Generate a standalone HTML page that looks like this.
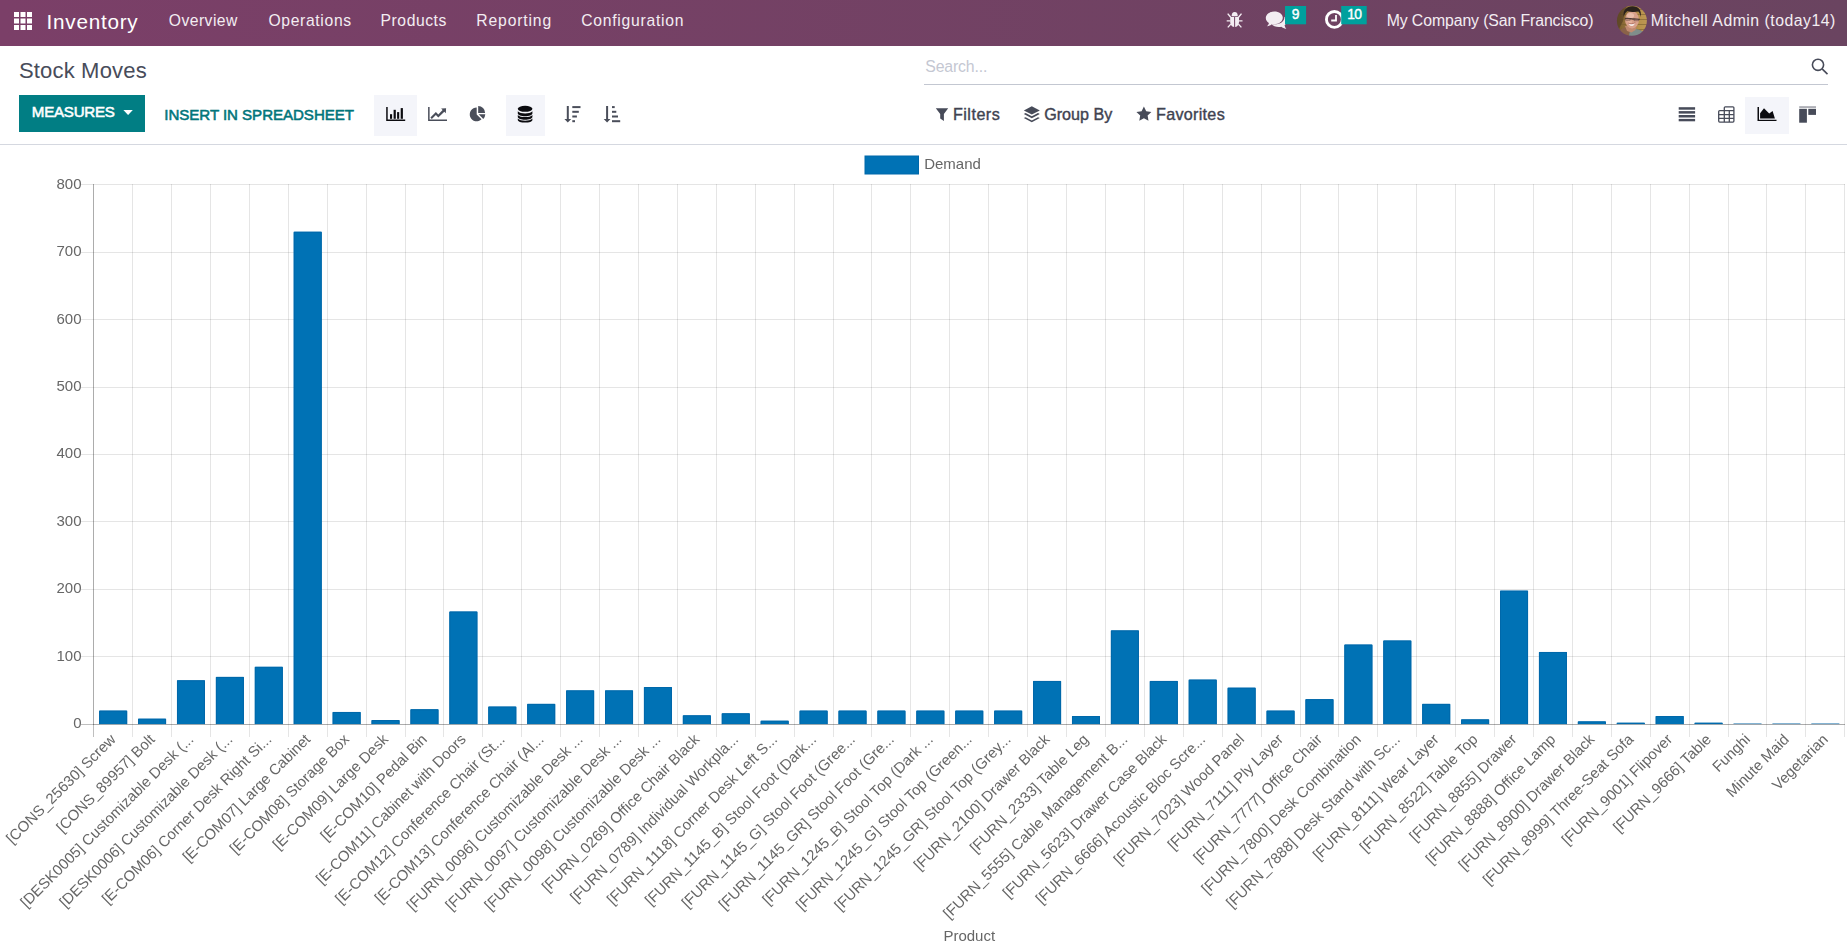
<!DOCTYPE html>
<html lang="en"><head><meta charset="utf-8"><title>Odoo - Stock Moves</title>
<style>
html,body{margin:0;padding:0;background:#fff;}
body{width:1847px;height:951px;overflow:hidden;position:relative;font-family:"Liberation Sans", sans-serif;}
.t{position:absolute;white-space:nowrap;font-family:"Liberation Sans", sans-serif;}
.abs{position:absolute;}
#nav{position:absolute;left:0;top:0;width:1847px;height:46px;background:linear-gradient(90deg,#7b3f68 0%,#6a4460 100%);}
#cpb{position:absolute;left:0;top:144px;width:1847px;height:1px;background:#d5d8e0;}
#sline{position:absolute;left:924px;top:84px;width:904px;height:1px;background:#c3c7d1;}
#btnm{position:absolute;left:19px;top:95px;width:126px;height:37px;background:#017e84;}
.abg{position:absolute;background:#f4f5fa;}
.badge{position:absolute;background:#00a09d;}
</style></head>
<body>
<div id="nav"></div>
<div id="btnm"></div>
<div class="abg" style="left:374px;top:95px;width:43px;height:41px"></div>
<div class="abg" style="left:506px;top:95px;width:39px;height:41px"></div>
<div class="abg" style="left:1745px;top:97px;width:44px;height:37px"></div>
<div id="sline"></div>
<div id="cpb"></div>
<svg id="icons" width="1847" height="145" viewBox="0 0 1847 145" style="position:absolute;left:0;top:0">
<!-- apps grid -->
<g fill="#fff">
<rect x="14" y="12" width="5" height="5"/><rect x="20.5" y="12" width="5" height="5"/><rect x="27" y="12" width="5" height="5"/>
<rect x="14" y="18.5" width="5" height="5"/><rect x="20.5" y="18.5" width="5" height="5"/><rect x="27" y="18.5" width="5" height="5"/>
<rect x="14" y="25" width="5" height="5"/><rect x="20.5" y="25" width="5" height="5"/><rect x="27" y="25" width="5" height="5"/>
</g>
<!-- bug -->
<g fill="#f3edf2" stroke="none">
<path d="M1231.600 16.300a3.100 4.300 0 0 1 6.200 0z"/>
<path d="M1230.200 17.100h3.900v10c-2.600-.3-3.900-2.500-3.900-5z"/>
<path d="M1235.100 17.100h3.900v5c0 2.500-1.300 4.700-3.900 5z"/>
<g stroke="#f3edf2" stroke-width="1.400" fill="none">
<path d="M1227.700 13.600l3 3.700M1241.500 13.600l-3 3.700M1226.700 20.900h3.600M1242.500 20.900h-3.600M1227.800 27.400l3-3.300M1241.400 27.400l-3-3.300"/>
</g>
</g>
<!-- comments -->
<g fill="#f3edf2">
<path d="M1271.500 23.800c1.300 2.100 4.300 3.200 7.300 3.200.9 0 1.700-.1 2.500-.3 1.300 1 2.800 1.900 5 2.200-.9-1.100-1.500-2.300-1.700-3.600 1.500-1 2.500-2.500 2.500-4.200 0-1.700-1-3.300-2.700-4.300.2 3.500-2.200 6.200-6.500 7.200-2.200.5-4.500.4-6.400-.2z"/>
<path d="M1274.300 11.500c-4.700 0-8.500 2.900-8.500 6.500 0 2 1.200 3.800 3.100 5-.2 1.200-.9 2.400-1.900 3.300 2 -.2 3.900-1.100 5.200-2.200.7.100 1.400.2 2.100.2 4.700 0 8.500-2.900 8.500-6.500s-3.800-6.300-8.500-6.300z"/>
</g>
<!-- clock -->
<g fill="none" stroke="#fff">
<circle cx="1334.400" cy="19.400" r="7.950" stroke-width="2.900"/>
<path d="M1336 14.900v5.600h-4.800" stroke-width="1.800"/>
</g>
<!-- badges -->
<rect x="1285" y="6" width="21.100" height="18.300" fill="#00a09d"/><rect x="1341.200" y="6" width="25.500" height="18.300" fill="#00a09d"/>
<!-- avatar -->
<defs><clipPath id="avc"><circle cx="1631.900" cy="20.800" r="15"/></clipPath>
<filter id="avb" x="-10%" y="-10%" width="120%" height="120%"><feGaussianBlur stdDeviation="0.55"/></filter>
<linearGradient id="avbg" x1="0" y1="0" x2="1" y2="0"><stop offset="0" stop-color="#6e5228"/><stop offset="0.35" stop-color="#94733a"/><stop offset="0.7" stop-color="#b8924c"/><stop offset="1" stop-color="#c09a55"/></linearGradient></defs>
<g clip-path="url(#avc)"><g filter="url(#avb)">
<rect x="1614" y="3" width="36" height="36" fill="url(#avbg)"/>
<path d="M1614 9.500h36M1614 14.500h36M1614 19.500h36M1614 24.500h36M1614 29.500h36" stroke="#7a5f30" stroke-width="1.100" opacity=".6"/>
<path d="M1614 3h14l-3 8-2 10-4 8-5 2z" fill="#4a3620" opacity=".55"/>
<path d="M1617 37c0-5 3-8 8-9.500l4-1 3 4 8-.5c3 1.500 6 4 7 8z" fill="#8a6248"/>
<path d="M1628.500 38l1.500-7.500 6-1.500c4 .5 8 2.500 11 6l1 4z" fill="#7f8d8b"/>
<path d="M1625 26l2 5 4.500 1.500 4-2.500 1.500-5z" fill="#c08a70"/>
<ellipse cx="1632" cy="19.700" rx="7" ry="8.700" fill="#d8a08a"/>
<ellipse cx="1630.500" cy="15.500" rx="3.600" ry="2.600" fill="#ecc3b0" opacity=".8"/>
<ellipse cx="1629.800" cy="22" rx="2.300" ry="2" fill="#e9b5a0" opacity=".7"/>
<path d="M1623.800 16.500c-1.300-6 2.500-10.300 8.700-10.300 6 0 9.300 3.800 8.300 10.800-.5-2.500-1.300-4.300-2.500-5.500-3.500.8-8 .5-10.800-.5-1.800 1.300-3 3-3.700 5.500z" fill="#2a211e"/>
<path d="M1624.800 18.300l5.800.4 1.800.3 1.800-.2 5.500.5" stroke="#3d2f2b" stroke-width="1.300" fill="none" opacity=".85"/>
<path d="M1625.600 18.300v1.900h4.600v-1.900M1634 18.800v1.900h4.600v-1.700" stroke="#4b3a35" stroke-width=".7" fill="none" opacity=".7"/>
<path d="M1628.300 23.200c2 1 4.800 1 6.800-.3-.8 2.300-2.300 3.100-3.500 3.100s-2.600-.9-3.300-2.800z" fill="#f4e9e4"/>
<path d="M1628 23c2.300 1.100 5 1 7.300-.4" stroke="#9c5348" stroke-width=".6" fill="none"/>
</g></g>
<!-- caret in MEASURES -->
<path d="M123.400 109.900h9.400l-4.700 5z" fill="#fff"/>
<!-- bar chart (active, black) -->
<g fill="#0b0b0f">
<path d="M386.200 107.100h1.500v12.500h17.500v1.400h-19z"/>
<rect x="390" y="114.200" width="2.100" height="4.600"/><rect x="393.600" y="109.800" width="2.200" height="9"/><rect x="397.100" y="112.100" width="2.100" height="6.700"/><rect x="400.700" y="108.100" width="2.200" height="10.700"/>
</g>
<!-- line chart -->
<g fill="#4a4e5a">
<path d="M428.100 107.100h1.500v12.500h17.400v1.400h-18.900z"/>
<path d="M431.800 118.900l-1.400-1.400 5.500-5.600 2.400 2.500 4.300-4.300-1.500-1.600 5-.3-.3 5-1.500-1.500-6 5.900-2.400-2.500z"/>
</g>
<!-- pie chart -->
<g fill="#4a4e5a">
<path d="M476.700 107.500v6.900l4.800 4.900a6.900 6.900 0 1 1-4.800-11.800z"/>
<path d="M478.200 106.100a6.900 6.900 0 0 1 6.900 6.900h-6.900z"/>
<path d="M478.700 114.300h6.600a6.900 6.900 0 0 1-2 4.600z"/>
</g>
<!-- database (active, black) -->
<g fill="#0b0b0f">
<ellipse cx="525.100" cy="108.800" rx="7.300" ry="3"/>
<path d="M517.800 111.300c1.300 1.600 4.300 2.200 7.300 2.200s6-.6 7.300-2.200v2.200c0 1.500-3.300 2.700-7.300 2.700s-7.300-1.200-7.300-2.700z"/>
<path d="M517.800 114.900c1.300 1.600 4.300 2.200 7.300 2.200s6-.6 7.300-2.200v2.200c0 1.500-3.300 2.700-7.300 2.700s-7.300-1.200-7.300-2.700z"/>
<path d="M517.800 118.500c1.300 1.600 4.300 2.200 7.300 2.200s6-.6 7.300-2.200v1.400c0 1.500-3.300 2.700-7.300 2.700s-7.300-1.200-7.300-2.700z"/>
</g>
<!-- sort amount desc -->
<g fill="#4a4e5a">
<path d="M566.800 106.100h2v12.800h2.400l-3.400 3.500-3.400-3.500h2.400z"/>
<rect x="572.300" y="106.100" width="8.200" height="2"/><rect x="572.300" y="110.800" width="6.500" height="2"/><rect x="572.300" y="115.500" width="4.600" height="2"/><rect x="572.300" y="120.200" width="2.700" height="2"/>
</g>
<!-- sort amount asc -->
<g fill="#4a4e5a">
<path d="M606.100 106.100h2v12.800h2.400l-3.400 3.500-3.400-3.500h2.400z"/>
<rect x="612" y="106.100" width="2.700" height="2"/><rect x="612" y="110.800" width="4.300" height="2"/><rect x="612" y="115.500" width="6" height="2"/><rect x="612" y="120.200" width="8.200" height="2"/>
</g>
<!-- filter -->
<path d="M935.800 108.200h12.400l-4.300 5.700v7.200l-3.700-2.700v-4.500z" fill="#474b59"/>
<!-- group by (layers) -->
<g fill="#474b59">
<path d="M1031.800 106.200l8 4.200-8 4.200-8-4.200z"/>
<path d="M1025.600 113.100l6.200 3.200 6.200-3.200 1.800.9-8 4.200-8-4.200z"/>
<path d="M1025.600 117.200l6.200 3.200 6.200-3.200 1.800.9-8 4.200-8-4.200z"/>
</g>
<!-- star -->
<path d="M1143.900 106.500l2.300 4.800 5.200.7-3.800 3.600.9 5.200-4.600-2.500-4.600 2.500.9-5.200-3.800-3.600 5.200-.7z" fill="#474b59"/>
<!-- search -->
<g fill="none" stroke="#474b59" stroke-width="1.600">
<circle cx="1818" cy="64.800" r="5.600"/><path d="M1822.100 68.900l5.400 5.200"/>
</g>
<!-- list view -->
<g fill="#474b59">
<rect x="1678.700" y="107.200" width="16.400" height="2.500"/><rect x="1678.700" y="111.100" width="16.400" height="2.500"/><rect x="1678.700" y="115" width="16.400" height="2.500"/><rect x="1678.700" y="118.900" width="16.400" height="2.400"/>
</g>
<!-- pivot view -->
<g fill="none" stroke="#474b59" stroke-width="1.300">
<path d="M1724.300 110.600v-2.800a1 1 0 0 1 1-1h7.600a1 1 0 0 1 1 1v13.300a1 1 0 0 1-1 1h-13.200a1 1 0 0 1-1-1v-9.500a1 1 0 0 1 1-1h14.200"/>
<path d="M1724.300 110.600v11.500M1729.300 110.600v11.500M1718.700 114.600h15.200M1718.700 118.400h15.200"/>
</g>
<!-- graph view (active) -->
<g fill="#0b0b0f">
<path d="M1757.500 107.100h1.500v12.600h17.500v1.300h-19z"/>
<path d="M1760.100 118.500v-5.300l3.900-4.900 5.200 5.300 3.400-2.700 2.300 7.600z"/>
</g>
<!-- kanban view -->
<g fill="#474b59">
<rect x="1799.200" y="106.300" width="16.800" height="1.500" opacity=".55"/>
<rect x="1799.200" y="108.800" width="7.700" height="13.900"/><rect x="1808.300" y="108.800" width="7.700" height="6.100"/>
</g>
</svg>

<div id="t_brand" class="t" style="left:46.50px;top:8.02px;font-size:20.73px;line-height:27px;color:#ffffff;font-weight:400;letter-spacing:0.749px;">Inventory</div>
<div id="t_m1" class="t" style="left:168.80px;top:9.86px;font-size:15.69px;line-height:21px;color:#f3edf2;font-weight:400;letter-spacing:0.457px;">Overview</div>
<div id="t_m2" class="t" style="left:268.40px;top:9.86px;font-size:15.69px;line-height:21px;color:#f3edf2;font-weight:400;letter-spacing:0.667px;">Operations</div>
<div id="t_m3" class="t" style="left:380.60px;top:9.86px;font-size:15.69px;line-height:21px;color:#f3edf2;font-weight:400;letter-spacing:0.543px;">Products</div>
<div id="t_m4" class="t" style="left:476.30px;top:9.86px;font-size:15.69px;line-height:21px;color:#f3edf2;font-weight:400;letter-spacing:0.851px;">Reporting</div>
<div id="t_m5" class="t" style="left:581.20px;top:9.86px;font-size:15.69px;line-height:21px;color:#f3edf2;font-weight:400;letter-spacing:0.750px;">Configuration</div>
<div id="t_b9" class="t" style="left:1291.70px;top:5.21px;font-size:13.83px;line-height:18px;color:#ffffff;font-weight:400;letter-spacing:0.000px;-webkit-text-stroke:0.4px #fff;">9</div>
<div id="t_b10" class="t" style="left:1347.20px;top:5.21px;font-size:13.83px;line-height:18px;color:#ffffff;font-weight:400;letter-spacing:-0.550px;-webkit-text-stroke:0.4px #fff;">10</div>
<div id="t_comp" class="t" style="left:1386.70px;top:9.61px;font-size:15.84px;line-height:21px;color:#f3edf2;font-weight:400;letter-spacing:-0.104px;">My Company (San Francisco)</div>
<div id="t_user" class="t" style="left:1650.80px;top:9.61px;font-size:15.84px;line-height:21px;color:#f3edf2;font-weight:400;letter-spacing:0.487px;">Mitchell Admin (today14)</div>
<div id="t_title" class="t" style="left:18.90px;top:55.66px;font-size:22.06px;line-height:29px;color:#484c5a;font-weight:400;letter-spacing:0.160px;">Stock Moves</div>
<div id="t_meas" class="t" style="left:31.80px;top:102.27px;font-size:15.1px;line-height:20px;color:#ffffff;font-weight:400;letter-spacing:-0.228px;-webkit-text-stroke:0.55px #fff;">MEASURES</div>
<div id="t_ins" class="t" style="left:164.30px;top:104.77px;font-size:15.08px;line-height:20px;color:#01757b;font-weight:400;letter-spacing:-0.040px;-webkit-text-stroke:0.55px #01757b;">INSERT IN SPREADSHEET</div>
<div id="t_search" class="t" style="left:925.30px;top:56.02px;font-size:15.82px;line-height:21px;color:#c4c7d2;font-weight:400;letter-spacing:-0.149px;">Search...</div>
<div id="t_filt" class="t" style="left:952.90px;top:103.51px;font-size:16.14px;line-height:21px;color:#3f4351;font-weight:400;letter-spacing:0.500px;-webkit-text-stroke:0.4px #3f4351;">Filters</div>
<div id="t_grp" class="t" style="left:1044.20px;top:103.51px;font-size:16.14px;line-height:21px;color:#3f4351;font-weight:400;letter-spacing:0.000px;-webkit-text-stroke:0.4px #3f4351;">Group By</div>
<div id="t_fav" class="t" style="left:1156.00px;top:103.51px;font-size:16.14px;line-height:21px;color:#3f4351;font-weight:400;letter-spacing:0.299px;-webkit-text-stroke:0.4px #3f4351;">Favorites</div>
<svg id="chart" width="1847" height="806" viewBox="0 145 1847 806" style="position:absolute;left:0;top:145px;will-change:transform" font-family='"Liberation Sans", sans-serif'>
<g shape-rendering="crispEdges" stroke-width="1" fill="none"><path d="M93.5 184.0V737.0" stroke="rgba(0,0,0,0.25)"/><path d="M132.5 184.0V737.0" stroke="rgba(0,0,0,0.1)"/><path d="M171.5 184.0V737.0" stroke="rgba(0,0,0,0.1)"/><path d="M210.5 184.0V737.0" stroke="rgba(0,0,0,0.1)"/><path d="M249.5 184.0V737.0" stroke="rgba(0,0,0,0.1)"/><path d="M288.5 184.0V737.0" stroke="rgba(0,0,0,0.1)"/><path d="M327.5 184.0V737.0" stroke="rgba(0,0,0,0.1)"/><path d="M366.5 184.0V737.0" stroke="rgba(0,0,0,0.1)"/><path d="M405.5 184.0V737.0" stroke="rgba(0,0,0,0.1)"/><path d="M443.5 184.0V737.0" stroke="rgba(0,0,0,0.1)"/><path d="M482.5 184.0V737.0" stroke="rgba(0,0,0,0.1)"/><path d="M521.5 184.0V737.0" stroke="rgba(0,0,0,0.1)"/><path d="M560.5 184.0V737.0" stroke="rgba(0,0,0,0.1)"/><path d="M599.5 184.0V737.0" stroke="rgba(0,0,0,0.1)"/><path d="M638.5 184.0V737.0" stroke="rgba(0,0,0,0.1)"/><path d="M677.5 184.0V737.0" stroke="rgba(0,0,0,0.1)"/><path d="M716.5 184.0V737.0" stroke="rgba(0,0,0,0.1)"/><path d="M755.5 184.0V737.0" stroke="rgba(0,0,0,0.1)"/><path d="M794.5 184.0V737.0" stroke="rgba(0,0,0,0.1)"/><path d="M833.5 184.0V737.0" stroke="rgba(0,0,0,0.1)"/><path d="M871.5 184.0V737.0" stroke="rgba(0,0,0,0.1)"/><path d="M910.5 184.0V737.0" stroke="rgba(0,0,0,0.1)"/><path d="M949.5 184.0V737.0" stroke="rgba(0,0,0,0.1)"/><path d="M988.5 184.0V737.0" stroke="rgba(0,0,0,0.1)"/><path d="M1027.5 184.0V737.0" stroke="rgba(0,0,0,0.1)"/><path d="M1066.5 184.0V737.0" stroke="rgba(0,0,0,0.1)"/><path d="M1105.5 184.0V737.0" stroke="rgba(0,0,0,0.1)"/><path d="M1144.5 184.0V737.0" stroke="rgba(0,0,0,0.1)"/><path d="M1183.5 184.0V737.0" stroke="rgba(0,0,0,0.1)"/><path d="M1222.5 184.0V737.0" stroke="rgba(0,0,0,0.1)"/><path d="M1261.5 184.0V737.0" stroke="rgba(0,0,0,0.1)"/><path d="M1300.5 184.0V737.0" stroke="rgba(0,0,0,0.1)"/><path d="M1338.5 184.0V737.0" stroke="rgba(0,0,0,0.1)"/><path d="M1377.5 184.0V737.0" stroke="rgba(0,0,0,0.1)"/><path d="M1416.5 184.0V737.0" stroke="rgba(0,0,0,0.1)"/><path d="M1455.5 184.0V737.0" stroke="rgba(0,0,0,0.1)"/><path d="M1494.5 184.0V737.0" stroke="rgba(0,0,0,0.1)"/><path d="M1533.5 184.0V737.0" stroke="rgba(0,0,0,0.1)"/><path d="M1572.5 184.0V737.0" stroke="rgba(0,0,0,0.1)"/><path d="M1611.5 184.0V737.0" stroke="rgba(0,0,0,0.1)"/><path d="M1650.5 184.0V737.0" stroke="rgba(0,0,0,0.1)"/><path d="M1689.5 184.0V737.0" stroke="rgba(0,0,0,0.1)"/><path d="M1728.5 184.0V737.0" stroke="rgba(0,0,0,0.1)"/><path d="M1766.5 184.0V737.0" stroke="rgba(0,0,0,0.1)"/><path d="M1805.5 184.0V737.0" stroke="rgba(0,0,0,0.1)"/><path d="M1844.5 184.0V737.0" stroke="rgba(0,0,0,0.1)"/><path d="M81.0 724.5H1845.0" stroke="rgba(0,0,0,0.25)"/><path d="M81.0 656.5H1845.0" stroke="rgba(0,0,0,0.1)"/><path d="M81.0 589.5H1845.0" stroke="rgba(0,0,0,0.1)"/><path d="M81.0 521.5H1845.0" stroke="rgba(0,0,0,0.1)"/><path d="M81.0 454.5H1845.0" stroke="rgba(0,0,0,0.1)"/><path d="M81.0 387.5H1845.0" stroke="rgba(0,0,0,0.1)"/><path d="M81.0 319.5H1845.0" stroke="rgba(0,0,0,0.1)"/><path d="M81.0 252.5H1845.0" stroke="rgba(0,0,0,0.1)"/><path d="M81.0 184.5H1845.0" stroke="rgba(0,0,0,0.1)"/><path d="M93.5 184.0V725.0" stroke="rgba(0,0,0,0.1)"/><path d="M93.0 724.5H1845.0" stroke="rgba(0,0,0,0.1)"/></g>
<g fill="#0072b5" stroke="#0068aa" stroke-width="1"><rect x="99.15" y="710.62" width="28.02" height="13.48" stroke="none"/><path d="M99.65 724.10V711.12H126.67V724.10" fill="none"/><rect x="138.06" y="718.71" width="28.02" height="5.39" stroke="none"/><path d="M138.56 724.10V719.21H165.58V724.10" fill="none"/><rect x="176.97" y="680.29" width="28.02" height="43.81" stroke="none"/><path d="M177.47 724.10V680.79H204.49V724.10" fill="none"/><rect x="215.89" y="676.92" width="28.02" height="47.18" stroke="none"/><path d="M216.39 724.10V677.42H243.41V724.10" fill="none"/><rect x="254.80" y="666.81" width="28.02" height="57.29" stroke="none"/><path d="M255.30 724.10V667.31H282.32V724.10" fill="none"/><rect x="293.71" y="231.74" width="28.02" height="492.36" stroke="none"/><path d="M294.21 724.10V232.24H321.23V724.10" fill="none"/><rect x="332.63" y="711.97" width="28.02" height="12.13" stroke="none"/><path d="M333.13 724.10V712.47H360.15V724.10" fill="none"/><rect x="371.54" y="720.06" width="28.02" height="4.04" stroke="none"/><path d="M372.04 724.10V720.56H399.06V724.10" fill="none"/><rect x="410.45" y="709.27" width="28.02" height="14.83" stroke="none"/><path d="M410.95 724.10V709.77H437.97V724.10" fill="none"/><rect x="449.37" y="611.54" width="28.02" height="112.56" stroke="none"/><path d="M449.87 724.10V612.04H476.89V724.10" fill="none"/><rect x="488.28" y="706.58" width="28.02" height="17.52" stroke="none"/><path d="M488.78 724.10V707.08H515.80V724.10" fill="none"/><rect x="527.19" y="703.88" width="28.02" height="20.22" stroke="none"/><path d="M527.69 724.10V704.38H554.71V724.10" fill="none"/><rect x="566.11" y="690.40" width="28.02" height="33.70" stroke="none"/><path d="M566.61 724.10V690.90H593.63V724.10" fill="none"/><rect x="605.02" y="690.40" width="28.02" height="33.70" stroke="none"/><path d="M605.52 724.10V690.90H632.54V724.10" fill="none"/><rect x="643.93" y="687.03" width="28.02" height="37.07" stroke="none"/><path d="M644.43 724.10V687.53H671.45V724.10" fill="none"/><rect x="682.85" y="715.34" width="28.02" height="8.76" stroke="none"/><path d="M683.35 724.10V715.84H710.37V724.10" fill="none"/><rect x="721.76" y="713.32" width="28.02" height="10.78" stroke="none"/><path d="M722.26 724.10V713.82H749.28V724.10" fill="none"/><rect x="760.67" y="720.73" width="28.02" height="3.37" stroke="none"/><path d="M761.17 724.10V721.23H788.19V724.10" fill="none"/><rect x="799.59" y="710.62" width="28.02" height="13.48" stroke="none"/><path d="M800.09 724.10V711.12H827.11V724.10" fill="none"/><rect x="838.50" y="710.62" width="28.02" height="13.48" stroke="none"/><path d="M839.00 724.10V711.12H866.02V724.10" fill="none"/><rect x="877.41" y="710.62" width="28.02" height="13.48" stroke="none"/><path d="M877.91 724.10V711.12H904.93V724.10" fill="none"/><rect x="916.33" y="710.62" width="28.02" height="13.48" stroke="none"/><path d="M916.83 724.10V711.12H943.85V724.10" fill="none"/><rect x="955.24" y="710.62" width="28.02" height="13.48" stroke="none"/><path d="M955.74 724.10V711.12H982.76V724.10" fill="none"/><rect x="994.15" y="710.62" width="28.02" height="13.48" stroke="none"/><path d="M994.65 724.10V711.12H1021.67V724.10" fill="none"/><rect x="1033.07" y="680.96" width="28.02" height="43.14" stroke="none"/><path d="M1033.57 724.10V681.46H1060.59V724.10" fill="none"/><rect x="1071.98" y="716.01" width="28.02" height="8.09" stroke="none"/><path d="M1072.48 724.10V716.51H1099.50V724.10" fill="none"/><rect x="1110.89" y="630.41" width="28.02" height="93.69" stroke="none"/><path d="M1111.39 724.10V630.91H1138.41V724.10" fill="none"/><rect x="1149.81" y="680.96" width="28.02" height="43.14" stroke="none"/><path d="M1150.31 724.10V681.46H1177.33V724.10" fill="none"/><rect x="1188.72" y="679.62" width="28.02" height="44.48" stroke="none"/><path d="M1189.22 724.10V680.12H1216.24V724.10" fill="none"/><rect x="1227.63" y="687.70" width="28.02" height="36.40" stroke="none"/><path d="M1228.13 724.10V688.20H1255.15V724.10" fill="none"/><rect x="1266.55" y="710.62" width="28.02" height="13.48" stroke="none"/><path d="M1267.05 724.10V711.12H1294.07V724.10" fill="none"/><rect x="1305.46" y="699.16" width="28.02" height="24.94" stroke="none"/><path d="M1305.96 724.10V699.66H1332.98V724.10" fill="none"/><rect x="1344.37" y="644.57" width="28.02" height="79.53" stroke="none"/><path d="M1344.87 724.10V645.07H1371.89V724.10" fill="none"/><rect x="1383.29" y="640.52" width="28.02" height="83.58" stroke="none"/><path d="M1383.79 724.10V641.02H1410.81V724.10" fill="none"/><rect x="1422.20" y="703.88" width="28.02" height="20.22" stroke="none"/><path d="M1422.70 724.10V704.38H1449.72V724.10" fill="none"/><rect x="1461.11" y="719.38" width="28.02" height="4.72" stroke="none"/><path d="M1461.61 724.10V719.88H1488.63V724.10" fill="none"/><rect x="1500.03" y="590.65" width="28.02" height="133.45" stroke="none"/><path d="M1500.53 724.10V591.15H1527.55V724.10" fill="none"/><rect x="1538.94" y="651.98" width="28.02" height="72.12" stroke="none"/><path d="M1539.44 724.10V652.48H1566.46V724.10" fill="none"/><rect x="1577.85" y="721.40" width="28.02" height="2.70" stroke="none"/><path d="M1578.35 724.10V721.90H1605.37V724.10" fill="none"/><rect x="1616.77" y="722.75" width="28.02" height="1.35" stroke="none"/><path d="M1617.27 724.10V723.25H1644.29V724.10" fill="none"/><rect x="1655.68" y="716.01" width="28.02" height="8.09" stroke="none"/><path d="M1656.18 724.10V716.51H1683.20V724.10" fill="none"/><rect x="1694.59" y="722.75" width="28.02" height="1.35" stroke="none"/><path d="M1695.09 724.10V723.25H1722.11V724.10" fill="none"/><rect x="1733.51" y="723.43" width="28.02" height="0.67" stroke="none" fill="rgba(0,100,164,0.85)"/><rect x="1772.42" y="723.43" width="28.02" height="0.67" stroke="none" fill="rgba(0,100,164,0.85)"/><rect x="1811.33" y="723.43" width="28.02" height="0.67" stroke="none" fill="rgba(0,100,164,0.85)"/></g>
<g font-size="15.0" fill="#666" text-anchor="end"><text x="81.5" y="728.00">0</text><text x="81.5" y="660.60">100</text><text x="81.5" y="593.20">200</text><text x="81.5" y="525.80">300</text><text x="81.5" y="458.40">400</text><text x="81.5" y="391.00">500</text><text x="81.5" y="323.60">600</text><text x="81.5" y="256.20">700</text><text x="81.5" y="188.80">800</text></g>
<g font-size="15.0" fill="#666" text-anchor="end"><text transform="translate(113.16 736.70) rotate(-45.0)" y="5.0">[CONS_25630] Screw</text><text transform="translate(152.07 736.70) rotate(-45.0)" y="5.0">[CONS_89957] Bolt</text><text transform="translate(190.98 736.70) rotate(-45.0)" y="5.0">[DESK0005] Customizable Desk (...</text><text transform="translate(229.90 736.70) rotate(-45.0)" y="5.0">[DESK0006] Customizable Desk (...</text><text transform="translate(268.81 736.70) rotate(-45.0)" y="5.0">[E-COM06] Corner Desk Right Si...</text><text transform="translate(307.72 736.70) rotate(-45.0)" y="5.0">[E-COM07] Large Cabinet</text><text transform="translate(346.64 736.70) rotate(-45.0)" y="5.0">[E-COM08] Storage Box</text><text transform="translate(385.55 736.70) rotate(-45.0)" y="5.0">[E-COM09] Large Desk</text><text transform="translate(424.46 736.70) rotate(-45.0)" y="5.0">[E-COM10] Pedal Bin</text><text transform="translate(463.38 736.70) rotate(-45.0)" y="5.0">[E-COM11] Cabinet with Doors</text><text transform="translate(502.29 736.70) rotate(-45.0)" y="5.0">[E-COM12] Conference Chair (St...</text><text transform="translate(541.20 736.70) rotate(-45.0)" y="5.0">[E-COM13] Conference Chair (Al...</text><text transform="translate(580.12 736.70) rotate(-45.0)" y="5.0">[FURN_0096] Customizable Desk ...</text><text transform="translate(619.03 736.70) rotate(-45.0)" y="5.0">[FURN_0097] Customizable Desk ...</text><text transform="translate(657.94 736.70) rotate(-45.0)" y="5.0">[FURN_0098] Customizable Desk ...</text><text transform="translate(696.86 736.70) rotate(-45.0)" y="5.0">[FURN_0269] Office Chair Black</text><text transform="translate(735.77 736.70) rotate(-45.0)" y="5.0">[FURN_0789] Individual Workpla...</text><text transform="translate(774.68 736.70) rotate(-45.0)" y="5.0">[FURN_1118] Corner Desk Left S...</text><text transform="translate(813.60 736.70) rotate(-45.0)" y="5.0">[FURN_1145_B] Stool Foot (Dark...</text><text transform="translate(852.51 736.70) rotate(-45.0)" y="5.0">[FURN_1145_G] Stool Foot (Gree...</text><text transform="translate(891.42 736.70) rotate(-45.0)" y="5.0">[FURN_1145_GR] Stool Foot (Gre...</text><text transform="translate(930.34 736.70) rotate(-45.0)" y="5.0">[FURN_1245_B] Stool Top (Dark ...</text><text transform="translate(969.25 736.70) rotate(-45.0)" y="5.0">[FURN_1245_G] Stool Top (Green...</text><text transform="translate(1008.16 736.70) rotate(-45.0)" y="5.0">[FURN_1245_GR] Stool Top (Grey...</text><text transform="translate(1047.08 736.70) rotate(-45.0)" y="5.0">[FURN_2100] Drawer Black</text><text transform="translate(1085.99 736.70) rotate(-45.0)" y="5.0">[FURN_2333] Table Leg</text><text transform="translate(1124.90 736.70) rotate(-45.0)" y="5.0">[FURN_5555] Cable Management B...</text><text transform="translate(1163.82 736.70) rotate(-45.0)" y="5.0">[FURN_5623] Drawer Case Black</text><text transform="translate(1202.73 736.70) rotate(-45.0)" y="5.0">[FURN_6666] Acoustic Bloc Scre...</text><text transform="translate(1241.64 736.70) rotate(-45.0)" y="5.0">[FURN_7023] Wood Panel</text><text transform="translate(1280.56 736.70) rotate(-45.0)" y="5.0">[FURN_7111] Ply Layer</text><text transform="translate(1319.47 736.70) rotate(-45.0)" y="5.0">[FURN_7777] Office Chair</text><text transform="translate(1358.38 736.70) rotate(-45.0)" y="5.0">[FURN_7800] Desk Combination</text><text transform="translate(1397.30 736.70) rotate(-45.0)" y="5.0">[FURN_7888] Desk Stand with Sc...</text><text transform="translate(1436.21 736.70) rotate(-45.0)" y="5.0">[FURN_8111] Wear Layer</text><text transform="translate(1475.12 736.70) rotate(-45.0)" y="5.0">[FURN_8522] Table Top</text><text transform="translate(1514.04 736.70) rotate(-45.0)" y="5.0">[FURN_8855] Drawer</text><text transform="translate(1552.95 736.70) rotate(-45.0)" y="5.0">[FURN_8888] Office Lamp</text><text transform="translate(1591.86 736.70) rotate(-45.0)" y="5.0">[FURN_8900] Drawer Black</text><text transform="translate(1630.78 736.70) rotate(-45.0)" y="5.0">[FURN_8999] Three-Seat Sofa</text><text transform="translate(1669.69 736.70) rotate(-45.0)" y="5.0">[FURN_9001] Flipover</text><text transform="translate(1708.60 736.70) rotate(-45.0)" y="5.0">[FURN_9666] Table</text><text transform="translate(1747.52 736.70) rotate(-45.0)" y="5.0">Funghi</text><text transform="translate(1786.43 736.70) rotate(-45.0)" y="5.0">Minute Maid</text><text transform="translate(1825.34 736.70) rotate(-45.0)" y="5.0">Vegetarian</text></g>
<rect x="865" y="156" width="53.5" height="18" fill="#0072b5" stroke="#0068aa" stroke-width="1"/>
<text x="924.2" y="169.0" font-size="15.0" fill="#666">Demand</text>
<text x="969.25" y="940.9" font-size="15.0" fill="#666" text-anchor="middle">Product</text>
</svg>
</body></html>
